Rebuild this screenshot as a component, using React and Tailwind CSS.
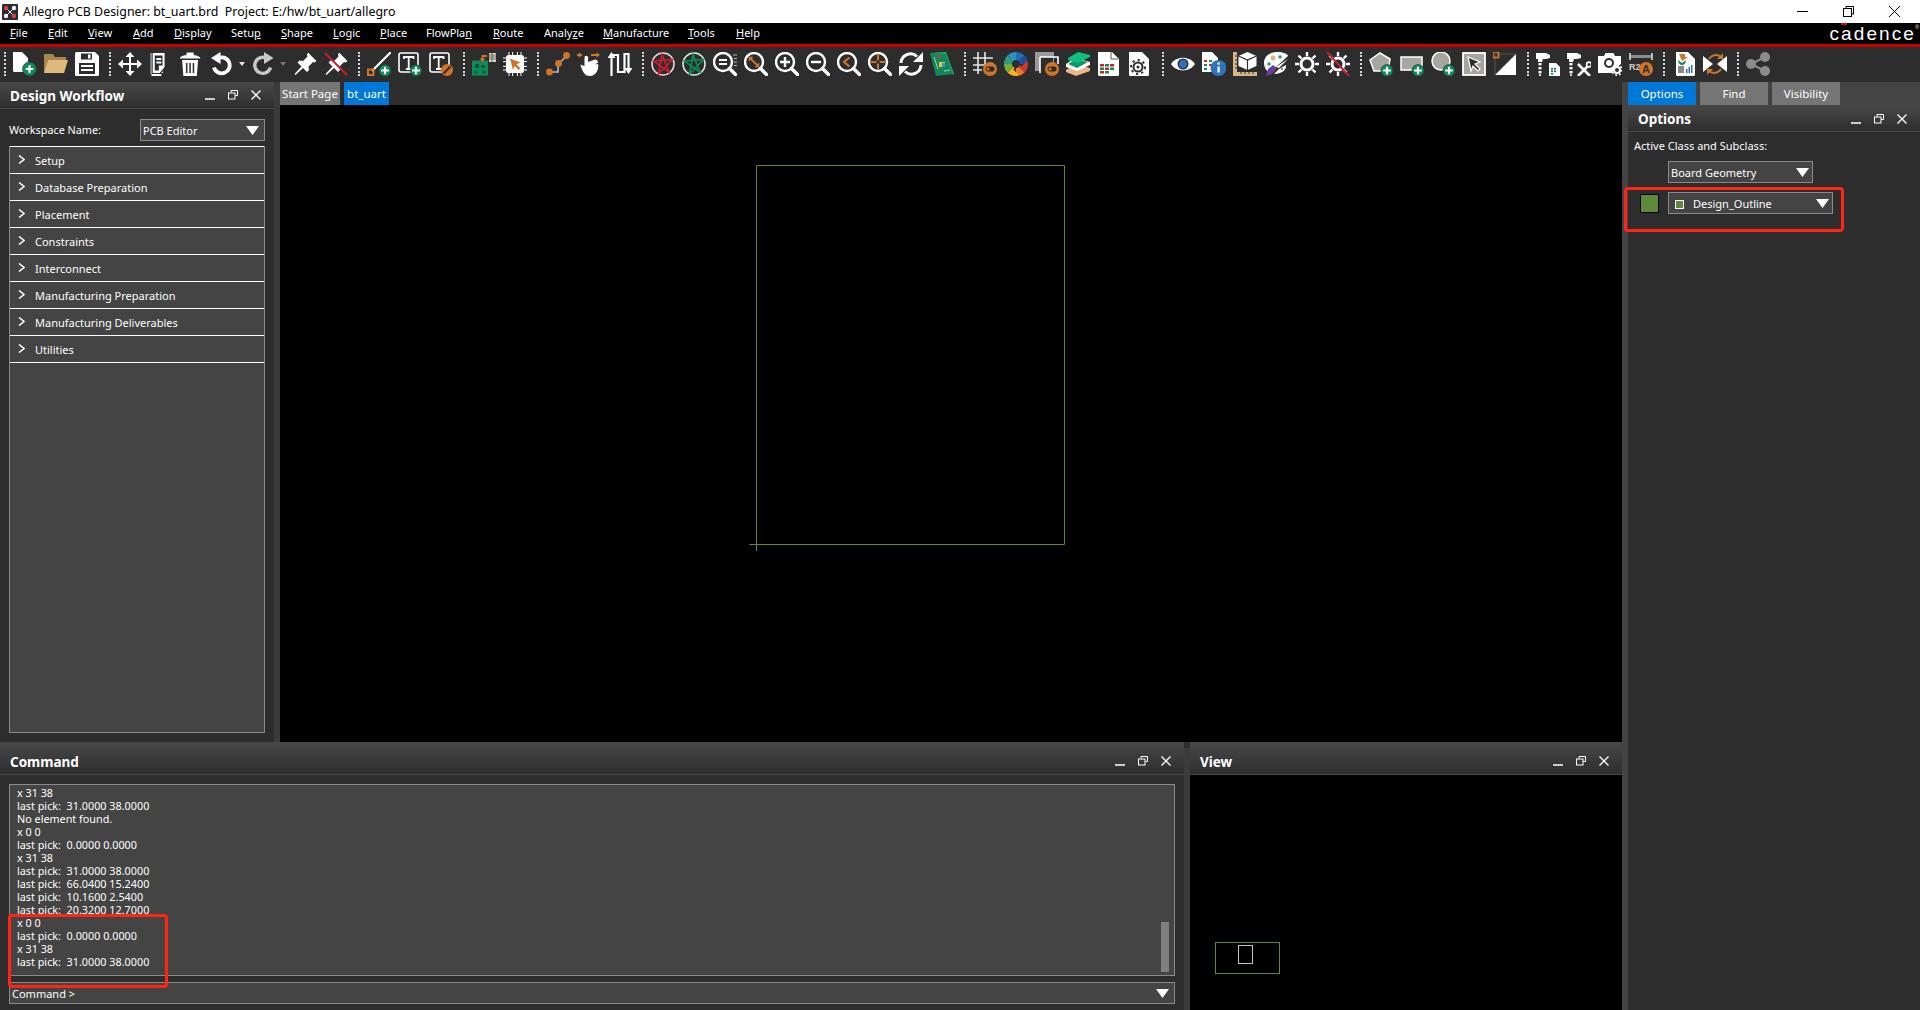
import React from 'react';

const OR = '#cf7529';
const GR = '#0d8a57';

function Ico({ children }) {
  return <svg width="24" height="24" viewBox="0 0 24 24" className="block">{children}</svg>;
}

const Plus = ({ x = 17, y = 17, r = 7 }) => (
  <g>
    <circle cx={x} cy={y} r={r} fill={GR} stroke="#2d2d2d" strokeWidth="0.6" />
    <path d={`M${x - 3.8} ${y}h7.6M${x} ${y - 3.8}v7.6`} stroke="#fff" strokeWidth="2.2" />
  </g>
);

const Toggle = ({ x = 17, y = 17, r = 7 }) => (
  <g>
    <circle cx={x} cy={y} r={r} fill={OR} />
    <rect x={x - 4.5} y={y - 2.5} width="9" height="5" rx="2.5" fill="#2d2d2d" />
    <circle cx={x - 2} cy={y} r="1.6" fill={OR} />
  </g>
);

const Lens = ({ children, w = 2.4 }) => (
  <g fill="none" stroke="#fff">
    <circle cx="10" cy="10" r="9" strokeWidth={w} />
    <path d="M16.5 16.5l6 6" strokeWidth="3.4" strokeLinecap="round" />
    {children}
  </g>
);

const Sun = () => (
  <g stroke="#fff" strokeWidth="2.4" fill="none">
    <circle cx="12" cy="12" r="6" strokeWidth="3" />
    <path d="M12 0v4M12 20v4M0 12h4M20 12h4M3.5 3.5l3 3M17.5 17.5l3 3M20.5 3.5l-3 3M6.5 17.5l-3 3" />
  </g>
);

const Pin = () => (
  <g fill="#fff">
    <path d="M15 0.5l8.5 8.5-2 1.500-1.500-.5-4.500 4.500.5 3.500-2 2-4-4-7.500 7-1-1 7-7.500-4-4 2-2 3.500.5 4.500-4.500-.5-1.500z" />
  </g>
);

const Drill = () => (
  <g fill="#fff">
    <path d="M0 1h10l4 2v3l-4 1H7l-1 3H2V7H0z" />
    <rect x="2.5" y="11" width="3" height="2.4" />
    <rect x="2.5" y="15" width="3" height="2.4" />
    <rect x="2.5" y="19" width="3" height="2.4" />
    <rect x="3.2" y="22" width="1.6" height="2" />
  </g>
);

const Doc = ({ x = 0, w = 20 }) => (
  <path d={`M${x + 1} 0h${w - 7}l7 7v15.5a1.5 1.5 0 0 1-1.5 1.5h-${w - 3}a1.5 1.5 0 0 1-1.5-1.5z`} fill="#fff" />
);

const wheel = ['#1d6fb8', '#1f4f9e', '#d8352a', '#e8782a', '#f2b51f', '#6cae3f', '#2e9a78', '#2f8fc4'];

const icons = {
  newFile: <Ico><path d="M0 0h9l6 6v14H1.500A1.500 1.500 0 0 1 0 18.500z" fill="#fff" /><Plus x="16.5" y="17" /></Ico>,
  folder: <Ico><path d="M0 2h9l2 3h11v3H4L1 20H0z" fill="#a78650" /><path d="M4 8h20l-4 13H0z" fill="#deba80" /></Ico>,
  save: <Ico><path d="M1.500 0H20l4 4v18.500a1.500 1.500 0 0 1-1.500 1.500h-21A1.500 1.500 0 0 1 0 22.500v-21A1.500 1.500 0 0 1 1.500 0z" fill="#fff" /><rect x="6" y="1.500" width="11" height="6" fill="#2d2d2d" /><rect x="13" y="2.500" width="2.500" height="4" fill="#fff" /><rect x="4" y="11" width="16" height="11" fill="#2d2d2d" /><path d="M6 14h12M6 18h12" stroke="#fff" strokeWidth="2" /></Ico>,
  move: <Ico><path d="M12 3v18M3 12h18" stroke="#fff" strokeWidth="2" /><path d="M12 0l4.500 5h-9zM12 24l4.500-5h-9zM0 12l5-4.500v9zM24 12l-5-4.500v9z" fill="#fff" /></Ico>,
  copy: <Ico><g transform="scale(.82 1)"><path d="M0 1h3v23h12v-2H2V1" fill="#fff" /><path d="M4.500 1h14.500v14l-6 6H4.500zM7 3.500v15h5v-5h4.500v-10z" fill="#fff" fillRule="evenodd" /><path d="M9 7h6M9 10.500h6" stroke="#fff" strokeWidth="1.800" /><path d="M17 19l-2 2h2z" fill="#fff" /></g></Ico>,
  trash: <Ico><g transform="scale(.84 1)"><path d="M0 5.500C3 3 7 3.500 7.500 3L8 .500h8L16.500 3c.5.5 4.500 0 7.500 2.500v1H0z" fill="#fff" /><path d="M2.500 8h19l-1.500 16H4z" fill="#fff" /><path d="M8 11v10M12 11v10M16 11v10" stroke="#2d2d2d" strokeWidth="1.800" /></g></Ico>,
  undo: <Ico><g transform="translate(-1.500 0)"><path d="M8 6.500a8 8 0 1 1-3.500 9" fill="none" stroke="#fff" strokeWidth="3.800" /><path d="M11 0v12L1.500 6z" fill="#fff" /></g></Ico>,
  redo: <Ico><path d="M15 6.500a8 8 0 1 0 3.500 9" fill="none" stroke="#c9c9c9" strokeWidth="3.400" /><path d="M12 0v12l9.500-6z" fill="#c9c9c9" /></Ico>,
  pin: <Ico><Pin /></Ico>,
  pinOff: <Ico><Pin /><path d="M1 1l22 22" stroke="#c8202c" strokeWidth="2" /></Ico>,
  lineAdd: <Ico><path d="M24 0L5 19" stroke="#fff" strokeWidth="2.200" /><rect x="1" y="17.500" width="5.500" height="5.500" fill="none" stroke={OR} strokeWidth="2" /><Plus x="18" y="18.5" r="6" /></Ico>,
  textAdd: <Ico><rect x="1" y="1" width="19" height="19" rx="2" fill="none" stroke="#fff" strokeWidth="1.600" /><path d="M6 7V5h9.500v2M10.700 5v12M8 17h5.500" fill="none" stroke="#fff" strokeWidth="1.800" /><Plus x="18" y="18.5" r="5.8" /></Ico>,
  textEdit: <Ico><rect x="1" y="1" width="19" height="19" rx="2" fill="none" stroke="#fff" strokeWidth="1.600" /><path d="M5 7V5h9.500v2M9.700 5v12M7 17h5.500" fill="none" stroke="#fff" strokeWidth="1.800" /><circle cx="18" cy="18" r="6" fill={OR} /><path d="M14.500 21.500l7-7" stroke="#3a2a18" strokeWidth="2" /></Ico>,
  pcbArrow: <Ico><rect x="0" y="8.500" width="16" height="15" rx="1" fill="#0c8a5c" /><rect x="3" y="12" width="4" height="4" fill="#153" /><rect x="9" y="13" width="4" height="3" fill="#153" /><circle cx="12" cy="20" r="1.500" fill="#153" /><circle cx="4" cy="20" r="1.500" fill="#153" /><rect x="17" y="1" width="7" height="9" fill="#ded4c0" /><path d="M17 3h7M17 5h7M17 7h7M20 1v9" stroke="#4a4a4a" strokeWidth=".7" /><path d="M15 4h-4.500v3" fill="none" stroke={OR} strokeWidth="1.800" /><path d="M7.500 6.500h6l-3 3.500z" fill={OR} /></Ico>,
  chip: <Ico><rect x="3" y="3" width="18" height="18" rx="2.500" fill="#fff" /><path d="M6 0v3M9.600 0v3M14.400 0v3M18 0v3M6 21v3M9.600 21v3M14.400 21v3M18 21v3M0 6h3M0 9.600h3M0 14.400h3M0 18h3M21 6h3M21 9.600h3M21 14.400h3M21 18h3" stroke="#fff" strokeWidth="1" /><path d="M7 6.500l10.500 4-4 1.800 4 4-1.800 1.800-4-4-1.700 4z" fill={OR} /></Ico>,
  route: <Ico><path d="M3 20h9v-8l10-9" fill="none" stroke="#bbb" strokeWidth="1.600" /><circle cx="3.500" cy="20" r="3.400" fill={OR} /><circle cx="12.500" cy="11.500" r="3.400" fill={OR} /><circle cx="20.500" cy="3.500" r="3.400" fill={OR} /></Ico>,
  hand: <Ico><path d="M4 13l3.500 1V5.500a1.800 1.800 0 0 1 3.600 0V10l7-2.500c2 0 2.500 1 3 3l-3 2 3-.5c1 5-2 12-8 12-5 0-7-3-9.600-10.500-.3-1 .7-1 1.500-.5z" fill="#fff" /><path d="M5 3H0M14 3h7" stroke={OR} strokeWidth="1.800" /><path d="M0 3l3.500-2.800v5.600zM23 3l-3.500-2.800v5.600z" fill={OR} /></Ico>,
  wave: <Ico><path d="M3.500 24V3H10v17h6.500V2H20.500v15" fill="none" stroke="#fff" strokeWidth="2.200" /><path d="M3.500 0L7.500 6h-8zM20.500 22l-4-6h8z" fill="#fff" /></Ico>,
  ratsRed: <Ico><circle cx="12" cy="12" r="11" fill="none" stroke="#f3d8d8" strokeWidth="1.500" /><path d="M11 2.500l7 17.500L2.500 9l19-1.500L7.500 22z" fill="none" stroke="#c91f2d" strokeWidth="1.600" /></Ico>,
  ratsGreen: <Ico><circle cx="12" cy="12" r="11" fill="none" stroke="#d8efe4" strokeWidth="1.500" /><path d="M11 2.500l7 17.500L2.500 9l19-1.500L7.500 22z" fill="none" stroke="#0d8a57" strokeWidth="1.600" /></Ico>,
  zoomList: <Ico><Lens><path d="M6 8h8M6 12h8" strokeWidth="2.200" /><path d="M20 3h4M21 6.500h3M21 10h3M21 13.500h3" strokeWidth="1" stroke="#bbb" /></Lens></Ico>,
  zoomFit: <Ico><Lens><path d="M6.500 6.500l7 7" stroke={OR} strokeWidth="1.800" /><path d="M5 5h4L5 9zM15 15h-4l4-4z" fill={OR} stroke={OR} strokeWidth=".6" /></Lens></Ico>,
  zoomIn: <Ico><Lens><path d="M5 10h10M10 5v10" strokeWidth="2.400" /></Lens></Ico>,
  zoomOut: <Ico><Lens><path d="M5 10h10" strokeWidth="2.400" /></Lens></Ico>,
  zoomPrev: <Ico><Lens><path d="M12.500 5.500L7 10l5.500 4.500" stroke={OR} strokeWidth="2.200" /></Lens></Ico>,
  zoomCenter: <Ico><Lens><path d="M3 10h5.500M11.500 10H17M10 3v5.500M10 11.500V17" stroke={OR} strokeWidth="2" /></Lens></Ico>,
  refresh: <Ico><path d="M2 11a9.500 9.500 0 0 1 16-6.500" fill="none" stroke="#fff" strokeWidth="3" /><path d="M22 13a9.500 9.500 0 0 1-16 6.500" fill="none" stroke="#fff" strokeWidth="3" /><path d="M24 0v10H14zM0 24V14h10z" fill="#fff" /></Ico>,
  board: <Ico><path d="M0 1l16-1 8 22-18 2z" fill="#12875a" /><path d="M1 1l15-1 8 22-1 1-7-21z" fill="#2aa376" /><rect x="9" y="10" width="6" height="5" fill="#e8c43a" /><rect x="12" y="11" width="3" height="4" fill="#3a8fd0" /><rect x="7" y="3.500" width="4" height="2.500" fill="#b34a3a" /><path d="M4 5l4 12M14 19l6-1" stroke="#bfe8d4" strokeWidth=".8" /></Ico>,
  grid: <Ico><path d="M0 6h20M0 13h12M0 18h9M5 0v22M12 0v12" stroke="#e8e8e8" strokeWidth="1.600" /><Toggle x="17" y="17" /></Ico>,
  color: <Ico>{wheel.map((c, i) => <circle key={c} cx="12" cy="12" r="8" fill="none" stroke={c} strokeWidth="8" pathLength="8" strokeDasharray="1 7" strokeDashoffset={-i} transform="rotate(-90 12 12)" />)}<circle cx="12" cy="12" r="3.500" fill="#2d2d2d" /></Ico>,
  windows: <Ico><rect x="0" y="0" width="19" height="19" fill="#9a9a9a" /><rect x="5" y="5" width="13" height="14" fill="#2d2d2d" /><path d="M5 5h18v7M5 5v16" fill="none" stroke="#fff" strokeWidth="1.600" /><Toggle x="17" y="17" /></Ico>,
  layers: <Ico><path d="M0 18l10-6 14 4v3l-14 5L0 20z" fill="#eeb58a" /><path d="M0 12l9-6 15 4v3l-13 6L0 15z" fill="#fff" /><path d="M2 12l8-5 12 3-11 6z" fill="#0d9a66" /><path d="M2 6l10-6 12 3v2l-13 6L2 8z" fill="#0fbf82" /></Ico>,
  docTable: <Ico><Doc x={0} w={21} /><g fill="#d0202c"><rect x="3" y="12" width="4" height="2.500" /><rect x="13" y="12" width="4" height="2.500" /><rect x="8" y="15.500" width="4" height="2.500" /><rect x="3" y="19" width="4" height="2.500" /></g><g fill="#0d8a57"><rect x="8" y="12" width="4" height="2.500" /><rect x="3" y="15.500" width="4" height="2.500" /><rect x="13" y="15.500" width="4" height="2.500" /><rect x="8" y="19" width="4" height="2.500" /></g><path d="M14 0v7h7" fill="none" stroke="#2d2d2d" strokeWidth=".8" /></Ico>,
  docGear: <Ico><Doc x={0} w={20} /><circle cx="10" cy="15" r="4.500" fill="none" stroke="#2d2d2d" strokeWidth="2" /><circle cx="10" cy="15" r="7" fill="none" stroke="#2d2d2d" strokeWidth="2" strokeDasharray="2.200 3.200" /><circle cx="10" cy="15" r="1.500" fill="#2d2d2d" /></Ico>,
  eye: <Ico><path d="M0 12C5 3.500 19 3.500 24 12 19 20.500 5 20.500 0 12z" fill="#fff" /><circle cx="12" cy="12" r="5.500" fill="#2d2d2d" /><circle cx="12" cy="12" r="4.200" fill="#2d6fb5" /></Ico>,
  docInfo: <Ico><path d="M0 0h10l6 6v14H0z" fill="#fff" /><g fill="#d0202c"><rect x="2" y="8" width="3" height="2" /><rect x="7" y="12" width="3" height="2" /></g><g fill="#0d8a57"><rect x="7" y="8" width="3" height="2" /><rect x="2" y="12" width="3" height="2" /><rect x="2" y="16" width="3" height="2" /></g><circle cx="16.500" cy="16" r="8" fill="#2d74b8" /><rect x="15.500" y="14.500" width="2.200" height="6" fill="#fff" /><rect x="15.500" y="10.500" width="2.200" height="2.200" fill="#fff" /></Ico>,
  ruler: <Ico><path d="M0 0h4v20h20v4H0z" fill="#d9b684" /><path d="M2 4h2M2 8h2M2 12h2M2 16h2M8 20v2M12 20v2M16 20v2M20 20v2" stroke="#2d2d2d" strokeWidth="1" /><path d="M14.500 0l9 4v10l-9 4-9-4V4z" fill="#fff" /><path d="M5.500 4l9 4 9-4M14.500 8v10" fill="none" stroke="#2d2d2d" strokeWidth="1.200" /></Ico>,
  palette: <Ico><path d="M13 0c6 0 11 2 11 4L12 15 7 21c-4-1-7-5-7-10C0 4 6 0 13 0z" fill="#fff" /><circle cx="9" cy="6" r="2.500" fill="#d9b684" /><circle cx="16" cy="5" r="1.800" fill="#2e9a78" /><circle cx="5" cy="12" r="1.800" fill="#2e9a78" /><path d="M24 7L15 16l-3-1z" fill="#fff" /><path d="M22 13c1 5-5 9-12 9l5-5z" fill="#fff" /><circle cx="18" cy="17" r="1.200" fill="#a06bb8" /><path d="M2 24l2-7 5-4 4 3-5 6z" fill="#6b3fa0" /></Ico>,
  sun: <Ico><Sun /></Ico>,
  sunOff: <Ico><Sun /><path d="M1 0l22 24" stroke="#c8202c" strokeWidth="2" /></Ico>,
  polyAdd: <Ico><path d="M11 1l10 6-2 12H5L1 8z" fill="#a8a5a0" stroke="#fff" strokeWidth="1.500" /><Plus x="18" y="18.5" r="6" /></Ico>,
  rectAdd: <Ico><rect x="1" y="5" width="21" height="13" fill="#a8a5a0" stroke="#fff" strokeWidth="1.500" /><Plus x="18" y="18.5" r="6" /></Ico>,
  circleAdd: <Ico><circle cx="10" cy="9" r="9" fill="#a8a5a0" stroke="#fff" strokeWidth="1.500" /><Plus x="18" y="18.5" r="6" /></Ico>,
  select: <Ico><rect x="1" y="1" width="22" height="22" fill="#a8a5a0" stroke="#fff" strokeWidth="1.800" /><path d="M6 5l12 5-5 2 5 5-2 2-5-5-2 5z" fill="#2d2d2d" stroke="#fff" strokeWidth="1.200" /></Ico>,
  diagonal: <Ico><path d="M2 23L23 2v21z" fill="#fff" /><path d="M2 23V2h21" fill="none" stroke="#555" strokeWidth="1" /><rect x="0" y="0" width="5.500" height="5.500" fill="none" stroke={OR} strokeWidth="1.800" /></Ico>,
  drillDoc: <Ico><Drill /><path d="M13 11h7l4 4v9H13z" fill="#fff" /><g fill="#0f6f6a"><rect x="15" y="16" width="2" height="1.600" /><rect x="18" y="16" width="2" height="1.600" /><rect x="15" y="18.500" width="2" height="1.600" /><rect x="18" y="18.500" width="2" height="1.600" /><rect x="15" y="21" width="2" height="1.600" /></g></Ico>,
  drillTool: <Ico><Drill /><path d="M11 12l12 12M23 12L11 24" stroke="#fff" strokeWidth="2.600" /><circle cx="22" cy="12.500" r="2.400" fill="#2d2d2d" stroke="#fff" strokeWidth="1.600" /></Ico>,
  camera: <Ico><path d="M0 4h6l1.500-3h8L17 4h6v8l-6 4-3 5H0z" fill="#fff" /><circle cx="11" cy="11" r="5" fill="#2d2d2d" /><circle cx="11" cy="11" r="3" fill="#fff" /><circle cx="19" cy="18" r="3" fill="none" stroke="#fff" strokeWidth="2" /><circle cx="19" cy="18" r="5" fill="none" stroke="#fff" strokeWidth="1.800" strokeDasharray="1.800 2" /></Ico>,
  r2a: <Ico><rect x="0" y="1" width="2" height="7" fill="#bbb" /><rect x="22" y="1" width="2" height="7" fill="#bbb" /><rect x="2" y="3" width="20" height="3" fill="#8c8c8c" /><text x="0" y="18" fill="#d0d0d0" fontSize="9" fontWeight="700" fontFamily="Liberation Sans, sans-serif">R2</text><circle cx="17" cy="17" r="7" fill={OR} /><text x="17" y="21" textAnchor="middle" fill="#2d2d2d" fontSize="11" fontWeight="700" fontFamily="Liberation Sans, sans-serif">A</text></Ico>,
  report: <Ico><Doc x={3} w={19} /><path d="M7 2h6v3h3l-6 4z" fill={OR} /><path d="M6 8c0 3 2 5 4 5s4-2 4-5l-4 3z" fill="#0d8a57" /><rect x="6" y="14" width="6" height="7" fill="#8a8a8a" /><rect x="14" y="17" width="1.500" height="4" fill="#2d6fb5" /><rect x="16.500" y="15" width="1.500" height="6" fill="#2d6fb5" /><rect x="19" y="13" width="1.500" height="8" fill="#2d6fb5" /></Ico>,
  bowtie: <Ico><path d="M0 4l10 8L0 20zM24 4L14 12l10 8z" fill="#fff" /><path d="M6 7a8 8 0 0 1 12-2M18 17a8 8 0 0 1-12 2" fill="none" stroke={OR} strokeWidth="2" /><path d="M20 1v6h-6zM4 23v-6h6z" fill={OR} /></Ico>,
  share: <Ico><path d="M19 5L5 12l14 7" fill="none" stroke="#8c8c8c" strokeWidth="2" /><circle cx="19" cy="5" r="5" fill="#8c8c8c" /><circle cx="5" cy="12" r="5" fill="#8c8c8c" /><circle cx="19" cy="19" r="5" fill="#8c8c8c" /></Ico>,
};

const toolbar = [
  '|', 'newFile', 'folder', 'save', '|', 'move', 'copy', 'trash', 'undo>', 'redo>', 'pin', 'pinOff', '|', 'lineAdd', 'textAdd', 'textEdit', '|', 'pcbArrow', 'chip', '|', 'route', 'hand', 'wave', '|',
  'ratsRed', 'ratsGreen', 'zoomList', 'zoomFit', 'zoomIn', 'zoomOut', 'zoomPrev', 'zoomCenter', 'refresh', 'board', '|', 'grid', 'color', 'windows', 'layers', 'docTable', 'docGear', '|',
  'eye', 'docInfo', 'ruler', 'palette', 'sun', 'sunOff', '|', 'polyAdd', 'rectAdd', 'circleAdd', 'select', 'diagonal', '|', 'drillDoc', 'drillTool', 'camera', 'r2a', '|', 'report', 'bowtie', '|', 'share',
];

const menus = [
  ['', 'F', 'ile', 'w-[38px]'],
  ['', 'E', 'dit', 'w-[40px]'],
  ['', 'V', 'iew', 'w-[45px]'],
  ['', 'A', 'dd', 'w-[41px]'],
  ['', 'D', 'isplay', 'w-[57px]'],
  ['Setu', 'p', '', 'w-[50px]'],
  ['', 'S', 'hape', 'w-[52px]'],
  ['', 'L', 'ogic', 'w-[47px]'],
  ['', 'P', 'lace', 'w-[46px]'],
  ['FlowPla', 'n', '', 'w-[67px]'],
  ['', 'R', 'oute', 'w-[51px]'],
  ['Analy', 'z', 'e', 'w-[59px]'],
  ['', 'M', 'anufacture', 'w-[85px]'],
  ['', 'T', 'ools', 'w-[48px]'],
  ['', 'H', 'elp', 'w-[40px]'],
];

const workflow = ['Setup', 'Database Preparation', 'Placement', 'Constraints', 'Interconnect', 'Manufacturing Preparation', 'Manufacturing Deliverables', 'Utilities'];

const log = [
  'x 31 38', 'last pick:  31.0000 38.0000', 'No element found.', 'x 0 0', 'last pick:  0.0000 0.0000', 'x 31 38', 'last pick:  31.0000 38.0000',
  'last pick:  66.0400 15.2400', 'last pick:  10.1600 2.5400', 'last pick:  20.3200 12.7000', 'x 0 0', 'last pick:  0.0000 0.0000', 'x 31 38', 'last pick:  31.0000 38.0000',
];

function Caret() {
  return (
    <svg width="13" height="9" viewBox="0 0 13 9" className="block shrink-0">
      <path d="M0 0h13L6.500 9z" fill="#fff" />
    </svg>
  );
}

function PanelButtons() {
  return (
    <div className="flex items-center gap-[13px] shrink-0">
      <svg width="10" height="10" viewBox="0 0 10 10"><path d="M0 9h10" stroke="#fff" strokeWidth="1.500" /></svg>
      <svg width="10" height="10" viewBox="0 0 10 10" fill="none" stroke="#fff"><path d="M3 2.500V.500h6.500v5H7" /><rect x=".5" y="3" width="6.500" height="6" /></svg>
      <svg width="10" height="10" viewBox="0 0 10 10"><path d="M.5.500l9 9M9.500.500l-9 9" stroke="#fff" strokeWidth="1.300" /></svg>
    </div>
  );
}

function PanelHeader({ title, className }) {
  return (
    <div className={`flex items-center justify-between pl-[10px] pr-[13px] bg-linear-to-b from-[#484848] to-[#2e2e2e] border-b border-[#484848] ${className}`}>
      <span className="font-bold text-[13.500px] text-white pt-[2px]">{title}</span>
      <PanelButtons />
    </div>
  );
}

function Select({ label, className, children }) {
  return (
    <div className={`flex items-center justify-between bg-[#444444] border border-[#8a8a8a] text-white text-[11px] ${className}`}>
      <span className="flex items-center pt-[3px]">{children}{label}</span>
      <Caret />
    </div>
  );
}

export default function App() {
  return (
    <div className="w-[1920px] h-[1010px] overflow-hidden flex flex-col bg-[#2d2d2d] text-white font-['Noto_Sans',sans-serif]">
      {/* title bar */}
      <div className="h-[23px] bg-white text-black flex items-center shrink-0">
        <svg width="16" height="16" viewBox="0 0 16 16" className="ml-[2px] mr-[5px]">
          <rect width="16" height="16" rx="1" fill="#2b2b33" />
          <path d="M4 4l8 8M12 4l-8 8" stroke="#e8e8e8" strokeWidth="1" />
          <circle cx="4" cy="4" r="2.200" fill="#d8443c" />
          <circle cx="12" cy="4" r="2.200" fill="#f2f2f2" />
          <circle cx="4" cy="12" r="2.200" fill="#f2f2f2" />
          <circle cx="12" cy="12" r="2.200" fill="#d8443c" />
        </svg>
        <span className="text-[12.400px] whitespace-pre pt-[2px]">Allegro PCB Designer: bt_uart.brd  Project: E:/hw/bt_uart/allegro</span>
        <div className="ml-auto flex items-center gap-[35px] pr-[20px]">
          <svg width="11" height="11" viewBox="0 0 11 11"><path d="M0 5.500h11" stroke="#000" /></svg>
          <svg width="11" height="11" viewBox="0 0 11 11" fill="none" stroke="#000"><path d="M3 2.500V.500h7.500v7.500H8.500" /><rect x=".5" y="2.500" width="8" height="8" /></svg>
          <svg width="11" height="11" viewBox="0 0 11 11"><path d="M0 0l11 11M11 0L0 11" stroke="#000" /></svg>
        </div>
      </div>

      {/* menu bar */}
      <div className="h-[21px] bg-black flex items-center shrink-0 pl-[10px] pb-[1px] text-[11px]">
        {menus.map(([a, u, b, w]) => (
          <span key={a + u + b} className={`${w} shrink-0 whitespace-pre`}>
            {a}<span className="underline">{u}</span>{b}
          </span>
        ))}
        <span className="ml-auto mr-[4px] text-[19px] leading-none tracking-[2.100px] font-['Liberation_Sans',sans-serif] relative">
          cadence
          <span className="absolute left-[12px] -top-[1px] w-[6px] h-[2px] bg-[#d0021b]" />
          <span className="absolute -right-[3px] top-[1px] text-[5px] tracking-normal">®</span>
        </span>
      </div>
      <div className="h-[3px] bg-[#c80000] shrink-0" />

      {/* toolbar */}
      <div className="h-[35px] shrink-0 flex items-center pl-[1px] pb-[1px] bg-[#2d2d2d]">
        {toolbar.map((t, i) => {
          if (t === '|') {
            return (
              <div key={i} className="w-[12px] shrink-0 h-[24px] pl-[3px]">
                <div className="h-full w-[2px] border-l-2 border-dotted border-[#d8d8d8]" />
              </div>
            );
          }
          if (t.endsWith('>')) {
            const name = t.slice(0, -1);
            return (
              <div key={i} className="w-[41px] shrink-0 flex items-center">
                {icons[name]}
                <svg width="6" height="4" viewBox="0 0 6 4" className="ml-[4px]">
                  <path d="M0 0h6L3 4z" fill={name === 'undo' ? '#e8e8e8' : '#777'} />
                </svg>
              </div>
            );
          }
          return <div key={i} className="w-[31px] shrink-0">{icons[t]}</div>;
        })}
      </div>

      {/* main body */}
      <div className="flex flex-1 min-h-0">
        <div className="w-[1622px] shrink-0 flex flex-col">
          <div className="flex h-[660px] shrink-0">
            {/* design workflow */}
            <div className="w-[274px] shrink-0 flex flex-col">
              <PanelHeader title="Design Workflow" className="h-[27px] shrink-0" />
              <div className="flex-1 flex flex-col pl-[9px] pr-[9px] pb-[9px]">
                <div className="flex items-center justify-between h-[37px] pt-[5px] shrink-0">
                  <span className="text-[10.800px]">Workspace Name:</span>
                  <Select label="PCB Editor" className="w-[125px] h-[22px] pl-[2px] pr-[5px]" />
                </div>
                <div className="flex-1 bg-[#444444] border-x border-b border-[#8a8a8a]">
                  <div className="border-t border-white">
                    {workflow.map(item => (
                      <div key={item} className="h-[27px] border-b border-white flex items-center pl-[8px] pt-[3px] text-[11px]">
                        <svg width="7" height="9" viewBox="0 0 7 9" fill="none" stroke="#fff" strokeWidth="1.500" className="mr-[10px] -mt-[5px]">
                          <path d="M1 .500l5 4-5 4" />
                        </svg>
                        {item}
                      </div>
                    ))}
                  </div>
                </div>
              </div>
            </div>
            <div className="w-[6px] shrink-0 bg-[#3b3b3b]" />
            {/* canvas */}
            <div className="flex-1 flex flex-col min-w-0">
              <div className="h-[23px] shrink-0 flex gap-[4px] text-[11.500px]">
                <div className="w-[60px] bg-[#757575] flex items-center justify-center">Start Page</div>
                <div className="w-[45px] bg-[#0078d7] flex items-center justify-center">bt_uart</div>
              </div>
              <div className="flex-1 bg-black">
                <svg width="1342" height="637" className="block">
                  <path d="M476.500 60.500v379M476.500 60.500h308v379h-315" fill="none" stroke="#5f8a3a" />
                  <path d="M476.500 439v7" stroke="#5f8a3a" />
                </svg>
              </div>
            </div>
          </div>

          {/* bottom docks */}
          <div className="flex-1 flex min-h-0">
            <div className="w-[1184px] shrink-0 flex flex-col relative">
              <PanelHeader title="Command" className="h-[33px] shrink-0 pt-[6px]" />
              <div className="flex-1 flex flex-col pl-[9px] pr-[9px] pt-[9px] pb-[6px]">
                <div className="h-[192px] shrink-0 bg-[#444444] border border-[#8a8a8a] relative pl-[7px] pt-[1px] text-[10.800px] leading-[13px] overflow-hidden whitespace-pre">
                  {log.map((line, i) => <div key={i}>{line}</div>)}
                  <div className="absolute right-[5px] bottom-[3px] w-[8px] h-[50px] bg-[#808080]" />
                </div>
                <div className="mt-[6px] h-[22px] shrink-0 border border-[#8a8a8a] bg-[#444444] flex items-center justify-between pl-[2px] pr-[5px] text-[11px]">
                  <span className="pt-[3px]">Command &gt;</span>
                  <Caret />
                </div>
              </div>
              {/* annotation */}
              <div className="absolute left-[8px] top-[172px] w-[160px] h-[74px] border-[3px] border-[#ff2414] rounded-[4px]" />
            </div>
            <div className="w-[6px] shrink-0 bg-[#3b3b3b] mt-[6px]" />
            <div className="flex-1 flex flex-col min-w-0">
              <PanelHeader title="View" className="h-[33px] shrink-0 pt-[6px]" />
              <div className="flex-1 bg-black">
                <svg width="432" height="235" className="block">
                  <rect x="25.500" y="167.500" width="64" height="31" fill="none" stroke="#5f8a3a" />
                  <rect x="48.500" y="170.500" width="14" height="18" fill="none" stroke="#c4c4c4" />
                </svg>
              </div>
            </div>
          </div>
        </div>

        <div className="w-[6px] shrink-0 bg-[#444444]" />

        {/* options */}
        <div className="flex-1 flex flex-col min-w-0 relative">
          <div className="h-[23px] shrink-0 bg-[#444444] flex gap-[4px] text-[11.500px]">
            <div className="w-[68px] bg-[#0078d7] flex items-center justify-center">Options</div>
            <div className="w-[68px] bg-[#757575] flex items-center justify-center">Find</div>
            <div className="w-[68px] bg-[#757575] flex items-center justify-center">Visibility</div>
          </div>
          <PanelHeader title="Options" className="h-[27px] shrink-0 pt-[1px]" />
          <div className="pl-[6px] pt-[6px] text-[11px]">
            <div className="h-[16px] leading-[16px]">Active Class and Subclass:</div>
            <Select label="Board Geometry" className="ml-[34px] mt-[7px] w-[145px] h-[22px] pl-[2px] pr-[3px]" />
            <div className="flex items-center mt-[9px]">
              <div className="ml-[6px] w-[19px] h-[19px] bg-[#5f8a3a] border border-black" />
              <Select label="Design_Outline" className="ml-[9px] w-[165px] h-[22px] pl-[6px] pr-[3px]">
                <span className="w-[9px] h-[9px] bg-[#5f8a3a] border border-white mr-[9px]" />
              </Select>
            </div>
          </div>
          {/* annotation */}
          <div className="absolute left-[-4px] top-[105px] w-[220px] h-[45px] border-[3px] border-[#ff2414] rounded-[4px]" />
        </div>
      </div>
    </div>
  );
}
